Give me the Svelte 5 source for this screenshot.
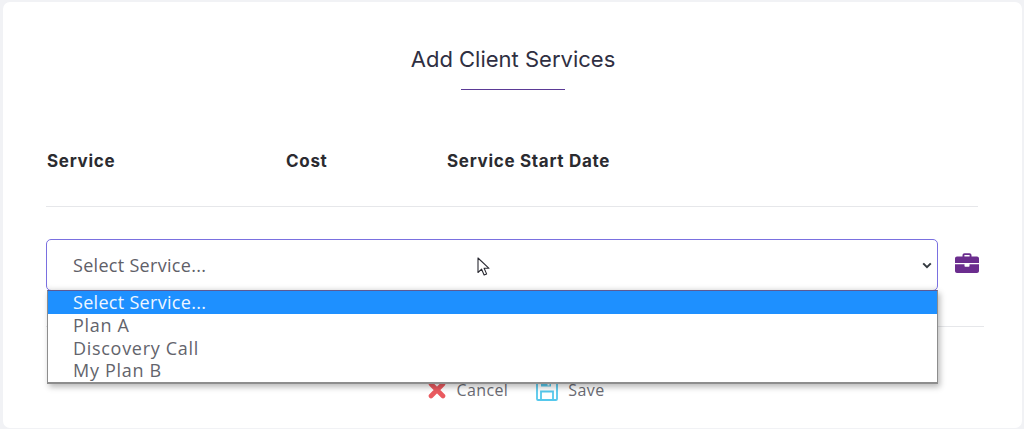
<script>
  const options = ['Select Service...', 'Plan A', 'Discovery Call', 'My Plan B'];
  let selected = 0;
</script>

<main class="card">
  <header class="head">
    <h2>Add Client Services</h2>
    <span class="rule"></span>
  </header>

  <div class="cols">
    <div class="col-service">Service</div>
    <div class="col-cost">Cost</div>
    <div>Service Start Date</div>
  </div>

  <div class="row">
    <div class="select">
      <span>Select Service...</span>
      <svg class="chevron" width="10" height="7" viewBox="0 0 10 7" aria-hidden="true">
        <path d="M1.2 1.4 5 5.2l3.8-3.8" fill="none" stroke="#343a40" stroke-width="2" />
      </svg>
      <ul class="menu">
        {#each options as opt, i}
          <li class:active={i === selected}>{opt}</li>
        {/each}
      </ul>
      <svg class="cursor" width="14" height="20" viewBox="0 0 14 20" aria-hidden="true">
        <path d="M1 1v14.5l3.6-3.3 2.5 5.8 2.5-1.1-2.5-5.6h4.9z" fill="#fff" stroke="#2b2b33" stroke-width="1.1" stroke-linejoin="round" />
      </svg>
    </div>
    <svg class="case" width="24" height="20" viewBox="0 0 24 20" aria-hidden="true">
      <path d="M7.5 4V2.2C7.5 1 8.4.2 9.5.2h5c1.100 0 2 .8 2 2V4h-1.900V2.100H9.400V4z" fill="#6b2d8e" />
      <path d="M2 3.600h20c1.100 0 2 .9 2 2V10H0V5.600c0-1.100.9-2 2-2zM0 11.200h9.500V13c0 .4.300.7.700.7h3.600c.4 0 .7-.3.700-.7v-1.800H24V18c0 1.100-.9 2-2 2H2c-1.100 0-2-.9-2-2z" fill="#6b2d8e" />
    </svg>
  </div>

  <div class="divider"></div>

  <footer class="actions">
    <button type="button">
      <svg width="18" height="18" viewBox="0 0 18 18" aria-hidden="true">
        <path d="M3 3l12 12M15 3 3 15" stroke="#ea5a5f" stroke-width="4.600" stroke-linecap="round" />
      </svg>
      Cancel
    </button>
    <button type="button">
      <svg width="22" height="22" viewBox="0 0 22 22" aria-hidden="true">
        <path d="M1 2c0-.6.4-1 1-1h15.500L21 4.500V20c0 .6-.4 1-1 1H2c-.6 0-1-.4-1-1z" fill="none" stroke="#55c8ec" stroke-width="1.800" />
        <path d="M5 1.500h10v6H5z" fill="#55c8ec" />
        <path d="M11.500 2.500h2v4h-2z" fill="#fff" />
        <path d="M5 20.500V12.500h12v8" fill="none" stroke="#55c8ec" stroke-width="1.800" />
      </svg>
      Save
    </button>
  </footer>
</main>

<style>
  :global(body) {
    margin: 0;
    background: #f1f2f5;
  }

  .card {
    box-sizing: border-box;
    height: 426px;
    margin: 2px 2px 1px 3px;
    padding: 44px 44px 0 43px;
    background: #fff;
    border-radius: 7px;
    overflow: hidden;
    font-family: Inter, "Open Sans", sans-serif;
    color: #32323f;
  }

  .head {
    display: flex;
    flex-direction: column;
    align-items: center;
    padding-left: 2px;
  }

  h2 {
    margin: 0;
    font-size: 22px;
    font-weight: 400;
    line-height: 26px;
    color: #2f2f42;
  }

  .rule {
    width: 104px;
    height: 1px;
    margin-top: 17px;
    background: #5b3a96;
  }

  .cols {
    display: flex;
    margin-top: 60px;
    padding-bottom: 34px;
    border-bottom: 1px solid #e6e7ea;
    font-size: 17px;
    font-weight: 700;
    line-height: 22px;
    letter-spacing: 0.7px;
    color: #2b2b30;
  }

  .col-service {
    width: 239px;
    padding-left: 1px;
  }

  .col-cost {
    width: 161px;
  }

  .row {
    display: flex;
    align-items: center;
    gap: 17px;
    margin-top: 32px;
  }

  .select {
    position: relative;
    flex: none;
    box-sizing: border-box;
    display: flex;
    align-items: center;
    justify-content: space-between;
    width: 892px;
    height: 52px;
    padding: 0 5px 0 26px;
    border: 1px solid #7a70e0;
    border-radius: 5px;
    box-shadow: inset 0 -6px 6px -6px rgba(0, 0, 0, 0.12);
    font-family: "Open Sans", sans-serif;
    font-size: 18px;
    letter-spacing: 0.3px;
    color: #5f6068;
  }

  .menu {
    position: absolute;
    top: 50px;
    left: 0;
    z-index: 2;
    box-sizing: border-box;
    width: 891px;
    height: 94px;
    margin: 0;
    padding: 0;
    list-style: none;
    background: #fff;
    border: 1px solid #8d8d8d;
    border-bottom-width: 2px;
    border-top-color: #5d5a94;
    box-shadow: 2px 3px 6px rgba(0, 0, 0, 0.28);
  }

  .menu li {
    height: 22.800px;
    padding-left: 25px;
    line-height: 22.800px;
    letter-spacing: 0.7px;
    color: #63646c;
  }

  .menu li.active {
    letter-spacing: 0.3px;
    background: #1e90ff;
    color: #eef6ff;
  }

  .cursor {
    position: absolute;
    top: 17px;
    left: 430px;
  }

  .case {
    flex: none;
    margin-bottom: 4px;
  }

  .divider {
    height: 1px;
    margin: 35px -6px 0 0;
    background: #e6e7ea;
  }

  .actions {
    display: flex;
    justify-content: center;
    gap: 28px;
    margin-top: 52px;
    padding-left: 9px;
  }

  button {
    display: flex;
    align-items: center;
    gap: 10px;
    padding: 0;
    border: 0;
    background: none;
    font-family: "Open Sans", sans-serif;
    font-size: 16px;
    letter-spacing: 0.4px;
    color: #6a6b73;
  }
</style>
